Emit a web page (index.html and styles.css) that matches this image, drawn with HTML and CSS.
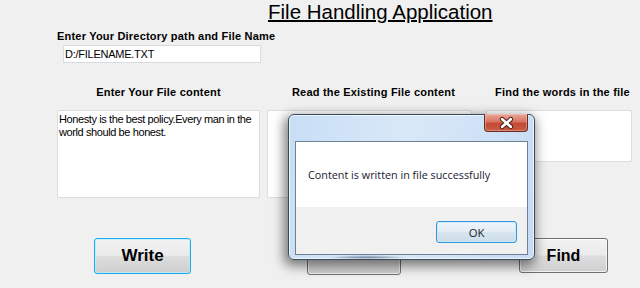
FILE: index.html
```html
<!DOCTYPE html>
<html lang="en">
  <head>
    <meta charset="UTF-8" />
    <title>File Handling Application</title>
    <link rel="stylesheet" href="styles.css">
  </head>
  <body>
    <div class="app">
      <h1 class="title">File Handling Application</h1>

      <div class="path">
        <label for="caminho">Enter Your Directory path and File Name</label>
        <input type="text" id="caminho" value="D:/FILENAME.TXT" />
      </div>

      <div class="columns">
        <label class="col-label" for="escrever">Enter Your File content</label>
        <label class="col-label col-read" for="ler">Read the Existing File content</label>
        <label class="col-label col-find" for="buscar">Find the words in the file</label>

        <textarea id="escrever" class="box box-write">Honesty is the best policy.Every man in the world should be honest.</textarea>
        <textarea id="ler" class="box box-read"></textarea>
        <textarea id="buscar" class="box box-find"></textarea>

        <button class="btn btn-write">Write</button>
        <button class="btn btn-read" aria-label="Read"></button>
        <button class="btn btn-find">Find</button>
      </div>
    </div>

    <!-- caixa de mensagem por cima do formulario -->
    <div class="msgbox" role="dialog">
      <div class="msgbox-titlebar">
        <button class="msgbox-close" aria-label="Close">
          <svg width="44" height="18" viewBox="0 0 44 18">
            <path d="M18 5 L27 13 M27 5 L18 13" stroke="#4a1c16" stroke-width="4.8" stroke-linecap="round" fill="none" />
            <path d="M18 5 L27 13 M27 5 L18 13" stroke="#ffffff" stroke-width="2.8" stroke-linecap="round" fill="none" />
          </svg>
        </button>
      </div>
      <div class="msgbox-content">
        <div class="msgbox-text">Content is written in file successfully</div>
        <div class="msgbox-actions">
          <button class="btn-ok">OK</button>
        </div>
      </div>
    </div>
  </body>
</html>
```

FILE: styles.css
```css
body {
  margin: 0;
  width: 640px;
  height: 288px;
  overflow: hidden;
  position: relative;
  background-color: #f0f0f0;
  font-family: "Liberation Sans", Arial, sans-serif;
  color: #000;
}
.title {
  margin: 0;
  padding-left: 268px;
  font-size: 20.5px;
  font-weight: normal;
  line-height: 23px;
  text-decoration: underline;
  text-underline-offset: 1px;
}
.path {
  padding: 7px 0 0 57px;
}
.path label,
.col-label {
  display: block;
  font-size: 11px;
  font-weight: bold;
  letter-spacing: 0.2px;
  line-height: 13px;
}
.path input {
  display: block;
  box-sizing: border-box;
  width: 198px;
  height: 18px;
  margin: 2px 0 0 6px;
  padding: 0 1px;
  border: 1px solid #d7dbe2;
  background: #fff;
  font-family: "Liberation Sans", Arial, sans-serif;
  font-size: 11px;
  letter-spacing: -0.25px;
  color: #000;
  outline: none;
}
.columns {
  display: grid;
  grid-template-columns: 210px 219px 146px;
  align-items: start;
  padding-left: 57px;
  margin-top: 23px;
}
.col-label {
  width: 203px;
  text-align: center;
}
.col-read {
  width: 213px;
}
.col-find {
  width: 153px;
}
.box {
  box-sizing: border-box;
  margin: 11px 0 0 0;
  padding: 2px 1px;
  border: 1px solid #dadde4;
  border-radius: 2px;
  background: #fff;
  resize: none;
  overflow: hidden;
  font-family: "Liberation Sans", Arial, sans-serif;
  font-size: 11px;
  letter-spacing: -0.4px;
  line-height: 13px;
  color: #000;
  outline: none;
}
.box-write {
  width: 203px;
  height: 88px;
}
.box-read {
  width: 205px;
  height: 88px;
}
.box-find {
  width: 146px;
  height: 52px;
}
.btn {
  box-sizing: border-box;
  margin-top: 40px;
  border: 1px solid #707070;
  border-radius: 3px;
  background: linear-gradient(#f2f2f2 0%, #ebebeb 48%, #dddddd 52%, #cfcfcf 100%);
  box-shadow: inset 0 0 0 1px rgba(255, 255, 255, 0.7);
  font-family: "Liberation Sans", Arial, sans-serif;
  font-size: 16px;
  font-weight: bold;
  color: #000;
  padding: 0;
}
.btn-write {
  width: 97px;
  height: 36px;
  margin-left: 37px;
  font-size: 17px;
  border-color: #18aee8;
  box-shadow: inset 0 0 0 1px rgba(190, 235, 252, 0.8);
}
.btn-read {
  width: 94px;
  height: 37px;
  margin-left: 40px;
}
.btn-find {
  width: 89px;
  height: 35px;
  margin-left: 33px;
}
.msgbox {
  position: absolute;
  left: 288px;
  top: 114px;
  box-sizing: border-box;
  width: 247px;
  height: 146px;
  padding: 0 6px 4px 6px;
  display: flex;
  flex-direction: column;
  border: 1px solid #3b4a5a;
  border-radius: 6px;
  background:
    radial-gradient(ellipse 42px 4px at 78px 100%, rgba(40, 70, 100, 0.85), rgba(40, 70, 100, 0)),
    linear-gradient(100deg, #c8def5 0%, #d9e8f8 45%, #c6dcf3 100%);
  box-shadow: -2px 4px 12px 2px rgba(0, 0, 0, 0.5), inset 0 0 0 1px rgba(255, 255, 255, 0.65);
}
.msgbox-titlebar {
  height: 26px;
  display: flex;
  justify-content: flex-end;
  align-items: flex-start;
}
.msgbox-close {
  width: 44px;
  height: 18px;
  margin-top: -1px;
  padding: 0;
  border: 1px solid #6b2a22;
  border-top: none;
  border-radius: 0 0 4px 4px;
  background: linear-gradient(#e9a898 0%, #d87462 45%, #c44a36 55%, #c85a42 100%);
  box-shadow: inset 0 0 0 1px rgba(255, 210, 200, 0.4);
  display: flex;
}
.msgbox-content {
  flex: 1;
  display: flex;
  flex-direction: column;
  border: 1px solid #6d8096;
  background: #f0f0f0;
}
.msgbox-text {
  height: 65px;
  display: flex;
  align-items: center;
  padding-left: 12px;
  background: #fff;
  font-family: "Open Sans", "Noto Sans", sans-serif;
  font-size: 10.8px;
  color: #18202e;
}
.msgbox-actions {
  display: flex;
  justify-content: flex-end;
  padding: 14px 10px 0 0;
}
.btn-ok {
  box-sizing: border-box;
  width: 81px;
  height: 22px;
  padding: 0;
  border: 1px solid #3398da;
  border-radius: 3px;
  background: linear-gradient(#eef5fa 0%, #e3edf4 48%, #d6e4ee 52%, #cddde9 100%);
  box-shadow: inset 0 0 0 1px rgba(200, 235, 252, 0.9);
  font-family: "Open Sans", "Noto Sans", sans-serif;
  font-size: 11.3px;
  color: #18202e;
}
```
